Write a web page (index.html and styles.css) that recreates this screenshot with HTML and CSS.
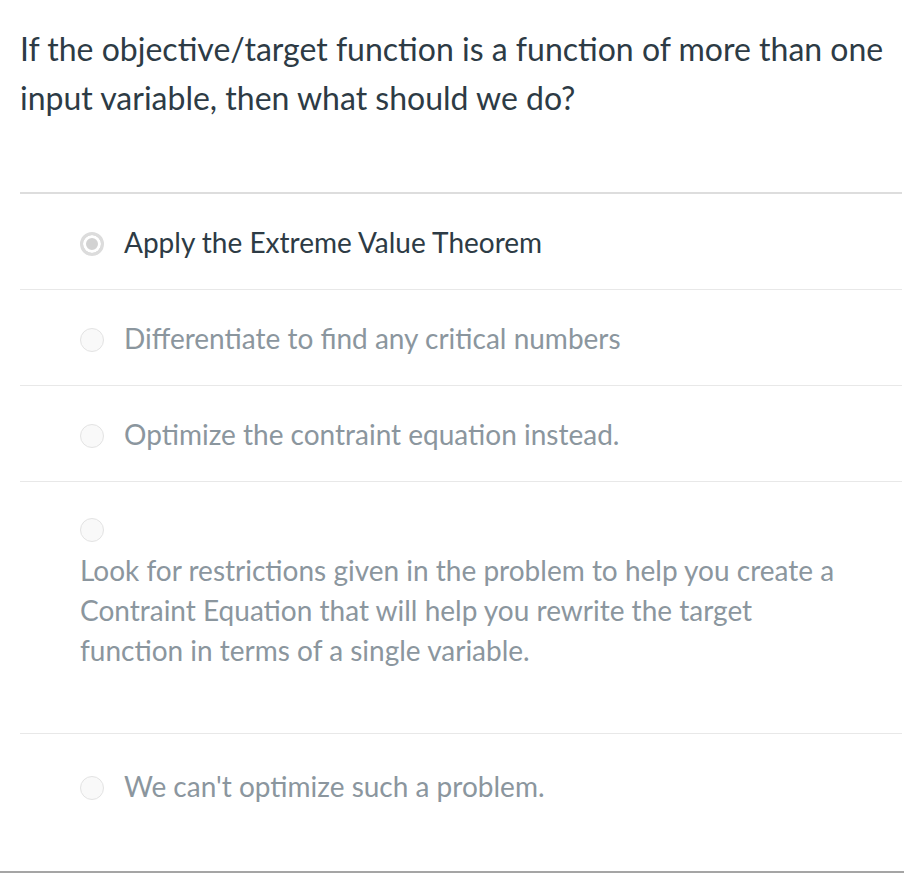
FILE: index.html
```html
<!DOCTYPE html>
<html lang="en">
<head>
  <meta charset="utf-8">
  <link rel="stylesheet" href="styles.css">
</head>
<body>

<div class="quiz">
  <div class="question-text">If the objective/target function is a function of more than one input variable, then what should we do?</div>

  <div class="answers">
    <div class="answer selected">
      <span class="radio"></span><span class="answer-text">Apply the Extreme Value Theorem</span>
    </div>
    <div class="answer">
      <span class="radio"></span><span class="answer-text">Differentiate to find any critical numbers</span>
    </div>
    <div class="answer">
      <span class="radio"></span><span class="answer-text">Optimize the contraint equation instead.</span>
    </div>
    <div class="answer long">
      <span class="radio"></span><span class="answer-text">Look for restrictions given in the problem to help you create a Contraint Equation that will help you rewrite the target function in terms of a single variable.</span>
    </div>
    <div class="answer last">
      <span class="radio"></span><span class="answer-text">We can't optimize such a problem.</span>
    </div>
  </div>
</div>

</body>
</html>
```

FILE: styles.css
```css
body {
  margin: 0;
  background: #ffffff;
  font-family: Lato, "Open Sans", sans-serif;
  color: #2d3b45;
}

.quiz {
  border-bottom: 2px solid #a5a5a5;
}

.question-text {
  margin-left: 20px;
  padding-top: 24px;
  font-size: 32px;
  line-height: 49px;
  width: 880px;
}

.answers {
  margin: 70px 2px 0 20px;
  border-top: 2px solid #dddddd;
}

.answer {
  padding: 28px 0 27px 60px;
  font-size: 28px;
  line-height: 40px;
  color: #8b969e;
  border-bottom: 1px solid #e8e8e8;
}

.answer.selected {
  color: #2d3b45;
}

.answer.last {
  border-bottom: none;
  padding-top: 32px;
  padding-bottom: 65px;
}

.radio {
  display: inline-block;
  box-sizing: border-box;
  width: 24px;
  height: 24px;
  border-radius: 50%;
  border: 1px solid #e3e3e3;
  background: #f9f9f9;
  vertical-align: -3px;
  margin-right: 20px;
}

.selected .radio {
  border: 3px solid #dcdcdc;
  background: #d2d2d2;
  box-shadow: inset 0 0 0 3px #ffffff;
}

.answer-text {
  display: inline-block;
  vertical-align: top;
}

.answer.long .radio {
  display: block;
  margin: 8px 0 8px 0;
}

.answer.long .answer-text {
  max-width: 765px;
  padding-bottom: 36px;
}
```
